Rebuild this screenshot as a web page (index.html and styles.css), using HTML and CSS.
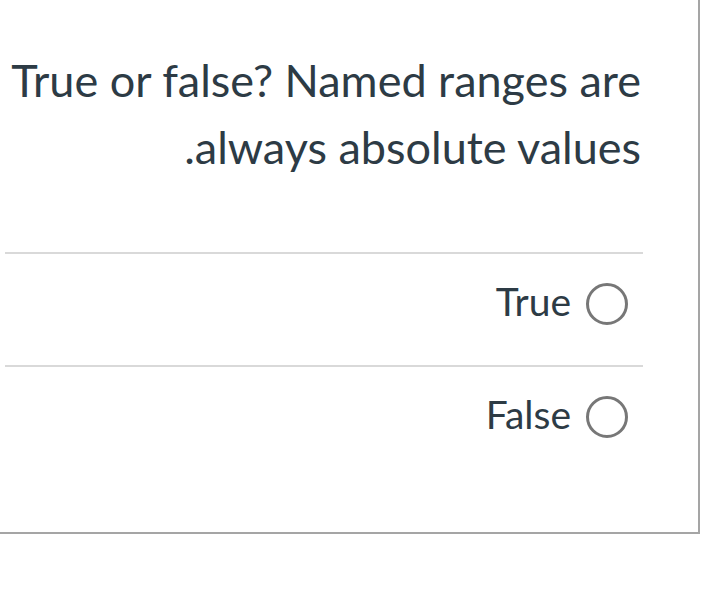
FILE: index.html
```html
<!DOCTYPE html>
<html lang="en" dir="rtl">
<head>
<meta charset="utf-8">
<link rel="stylesheet" href="styles.css">
</head>
<body>
<div class="card">
  <div class="content">
    <div class="question">True or false? Named ranges are always absolute values.</div>
    <div class="answers">
      <label class="answer">
        <span class="radio"></span>
        <span class="answer-text">True</span>
      </label>
      <label class="answer">
        <span class="radio"></span>
        <span class="answer-text">False</span>
      </label>
    </div>
  </div>
</div>
</body>
</html>
```

FILE: styles.css
```css
html, body {
  margin: 0;
  padding: 0;
  background: #ffffff;
}

body {
  direction: rtl;
  font-family: Lato, "Noto Sans", sans-serif;
  color: #2d3b45;
}

.card {
  margin-right: 14px;
  padding: 0 55px 0 0;
  border-right: 2px solid #a5a5a5;
  border-bottom: 2px solid #a5a5a5;
}

.content {
  margin-left: 5px;
  padding-bottom: 54px;
}

.question {
  padding: 47px 2px 0 0;
  font-size: 45px;
  line-height: 67px;
  height: 252px;
  box-sizing: border-box;
  text-align: right;
}

.answers {
  display: flex;
  flex-direction: column;
}

.answer {
  display: flex;
  align-items: center;
  gap: 15px;
  box-sizing: content-box;
  height: 99px;
  padding: 0 15px 12px 0;
  border-top: 2px solid #d9d9d9;
}

.radio {
  width: 36px;
  height: 36px;
  border: 3px solid #777;
  border-radius: 50%;
  flex: none;
}

.answer-text {
  font-size: 39px;
  line-height: 1;
  margin-bottom: 4px;
}
```
